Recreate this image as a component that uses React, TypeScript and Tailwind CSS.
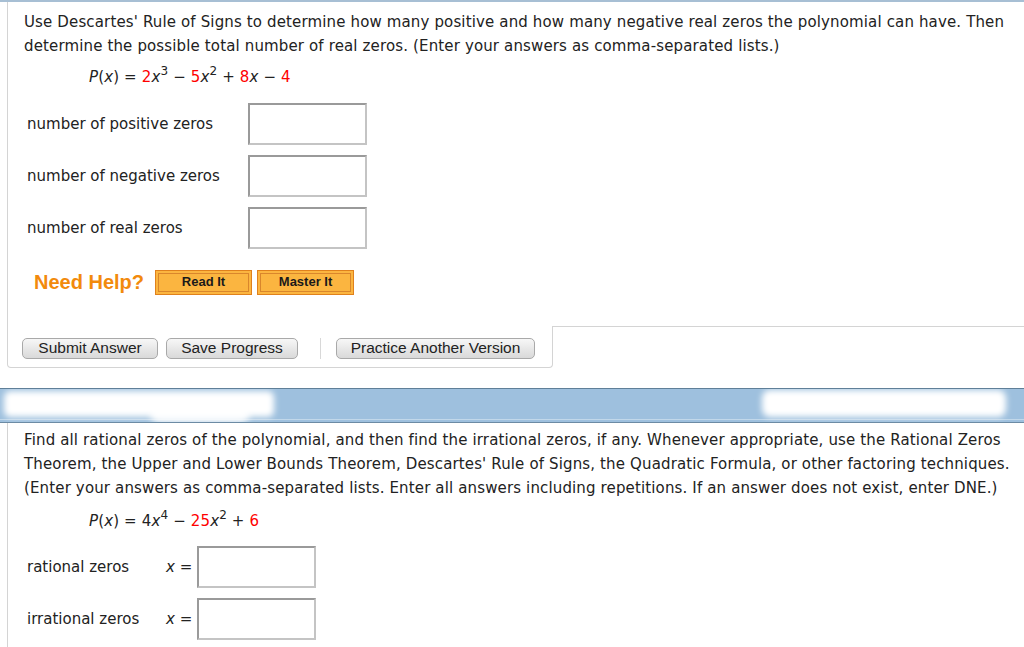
import type { ReactNode } from 'react';

const verdana = { fontFamily: '"DejaVu Sans", Verdana, sans-serif' };
const arial = { fontFamily: '"Liberation Sans", Arial, sans-serif' };

function Red({ children }: { children: ReactNode }) {
  return <span className="text-[#ff0000]">{children}</span>;
}

function Sup({ children }: { children: ReactNode }) {
  return <span className="relative -top-[7px] text-[12px] leading-none">{children}</span>;
}

function AnswerBox() {
  return (
    <div className="w-[119px] h-[42px] border-2 border-[#9a9a9a] border-b-[#c4c4c4] border-r-[#c4c4c4] bg-white" />
  );
}

function GrayButton({ label, className = '' }: { label: string; className?: string }) {
  return (
    <button
      className={`h-[21px] rounded-[5px] border border-[#a9a9a9] bg-gradient-to-b from-[#f7f7f7] to-[#d9d9d9] text-[15.5px] leading-none text-[#222] ${className}`}
      style={arial}
    >
      {label}
    </button>
  );
}

function HelpButton({ label }: { label: string }) {
  return (
    <button className="w-[97px] h-[25px] border border-[#e0811c] bg-[#fbb540] p-[2px]" style={arial}>
      <div className="h-full w-full border border-[#d9862c] flex items-center justify-center text-[13px] font-bold text-[#1a1a1a]">
        {label}
      </div>
    </button>
  );
}

export default function App() {
  return (
    <div className="w-[1024px] h-[647px] overflow-hidden bg-white text-[#222]" style={verdana}>
      {/* top strip */}
      <div className="h-[2px] bg-[#a7bfd4]" />

      {/* question 1 */}
      <div className="ml-[7px] border-l border-[#d4d4d4] pb-[29px]">
        <div className="pl-[16px] pt-[8px] text-[15px] leading-[24px] tracking-[0.14px]">
          <p>
            Use Descartes' Rule of Signs to determine how many positive and how many negative real zeros the polynomial can have. Then
            determine the possible total number of real zeros. (Enter your answers as comma-separated lists.)
          </p>
          <p className="mt-[7px] pl-[65px]">
            <i>P</i>(<i>x</i>) = <Red>2</Red><i>x</i><Sup>3</Sup> − <Red>5</Red><i>x</i><Sup>2</Sup> + <Red>8</Red><i>x</i> − <Red>4</Red>
          </p>
        </div>

        <div className="pl-[19px] mt-[14px] flex flex-col gap-[10px] text-[15px]">
          {['number of positive zeros', 'number of negative zeros', 'number of real zeros'].map((label) => (
            <div key={label} className="flex items-center">
              <span className="w-[221px]">{label}</span>
              <AnswerBox />
            </div>
          ))}
        </div>

        <div className="pl-[26px] mt-[18px] flex items-center gap-[5px]">
          <span className="text-[20px] font-bold text-[#f28a0c] mr-[6px]" style={arial}>
            Need Help?
          </span>
          <HelpButton label="Read It" />
          <HelpButton label="Master It" />
        </div>
      </div>

      {/* buttons row */}
      <div className="flex">
        <div className="ml-[7px] w-[546px] h-[42px] border-l border-b border-r border-[#d4d4d4] rounded-b-[4px] flex items-center pl-[14px] pt-[3px]">
          <GrayButton label="Submit Answer" className="w-[136px]" />
          <GrayButton label="Save Progress" className="w-[132px] ml-[8px]" />
          <div className="w-px h-[21px] bg-[#d8d8d8] ml-[22px]" />
          <GrayButton label="Practice Another Version" className="w-[199px] ml-[15px]" />
        </div>
        <div className="flex-1 border-t border-[#d4d4d4]" />
      </div>

      {/* blue band */}
      <div className="relative mt-[20px] h-[35px] bg-[#9ec0de] border-t border-[#5f7f98] border-b border-b-[#6c8ba4] overflow-hidden">
        <div className="absolute left-0 right-0 bottom-[2px] h-px bg-[#c2d8ea]" />
        <div className="absolute left-[4px] top-[2px] w-[270px] h-[26px] bg-white rounded-[6px] blur-[3px]" />
        <div className="absolute left-[150px] top-[16px] w-[100px] h-[18px] bg-white/90 rounded-full blur-[3px]" />
        <div className="absolute left-[762px] top-[1px] w-[244px] h-[27px] bg-white rounded-[8px] blur-[3px]" />
      </div>

      {/* question 2 */}
      <div className="ml-[7px] border-l border-[#d4d4d4] h-[300px]">
        <div className="pl-[16px] pt-[5px] text-[15px] leading-[24px] tracking-[0.14px]">
          <p>
            Find all rational zeros of the polynomial, and then find the irrational zeros, if any. Whenever appropriate, use the Rational Zeros
            Theorem, the Upper and Lower Bounds Theorem, Descartes' Rule of Signs, the Quadratic Formula, or other factoring techniques.
            (Enter your answers as comma-separated lists. Enter all answers including repetitions. If an answer does not exist, enter DNE.)
          </p>
          <p className="mt-[9px] pl-[65px]">
            <i>P</i>(<i>x</i>) = 4<i>x</i><Sup>4</Sup> − <Red>25</Red><i>x</i><Sup>2</Sup> + <Red>6</Red>
          </p>
        </div>

        <div className="pl-[19px] mt-[13px] flex flex-col gap-[10px] text-[15px]">
          {['rational zeros', 'irrational zeros'].map((label) => (
            <div key={label} className="flex items-center">
              <span className="w-[139px]">{label}</span>
              <span className="w-[31px]">
                <i>x</i> =
              </span>
              <AnswerBox />
            </div>
          ))}
        </div>
      </div>
    </div>
  );
}
